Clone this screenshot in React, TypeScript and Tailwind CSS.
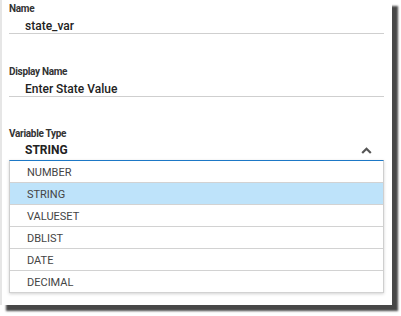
import React from "react";

const options = ["NUMBER", "STRING", "VALUESET", "DBLIST", "DATE", "DECIMAL"];

function Field({ label, value, h }: { label: string; value: string; h: string }) {
  return (
    <div className={h}>
      <div className="h-[12px] text-[10px] leading-[12px] font-bold tracking-[-0.3px] text-[#333]">{label}</div>
      <div className="mt-[4px] h-[15px] border-b border-[#cfcfcf] pl-[16px] text-[12px] leading-[14px] font-medium text-[#222]">
        {value}
      </div>
    </div>
  );
}

export default function App() {
  const selected = "STRING";
  return (
    <div className="w-[401px] h-[316px] bg-white" style={{ fontFamily: "Roboto, 'Liberation Sans', sans-serif" }}>
      <div className="w-[392px] h-[305px] bg-white border-l-2 border-[#e6e6e6] shadow-[6px_6px_2px_rgba(0,0,0,0.72)] pl-[7px] pr-[8px] pt-[3px]">
        <Field label="Name" value="state_var" h="h-[63px]" />
        <Field label="Display Name" value="Enter State Value" h="h-[62px]" />

        {/* Variable type select */}
        <div>
          <div className="h-[12px] text-[10px] leading-[12px] font-bold tracking-[-0.3px] text-[#333]">Variable Type</div>
          <div className="mt-[3px] h-[17px] flex items-start justify-between pl-[16px] pr-[12px]">
            <span className="text-[12px] leading-[14px] font-bold text-[#222]">{selected}</span>
            <svg width="11" height="7" viewBox="0 0 11 7" className="mt-[4px]">
              <path d="M1.2 6 L5.5 1.8 L9.8 6" fill="none" stroke="#555" strokeWidth="2.2" />
            </svg>
          </div>
          <div className="border-t border-[#1d78c6] border-x border-x-[#cfcfcf] shadow-[0_1px_3px_rgba(0,0,0,0.18)]">
            {options.map((o) => (
              <div
                key={o}
                className={
                  "h-[22px] border-b border-[#d2d2d2] pl-[17px] pt-[2px] text-[11px] leading-[19px] text-[#444] " +
                  (o === selected ? "bg-[#bee3fa]" : "bg-white")
                }
              >
                {o}
              </div>
            ))}
          </div>
        </div>
      </div>
    </div>
  );
}
